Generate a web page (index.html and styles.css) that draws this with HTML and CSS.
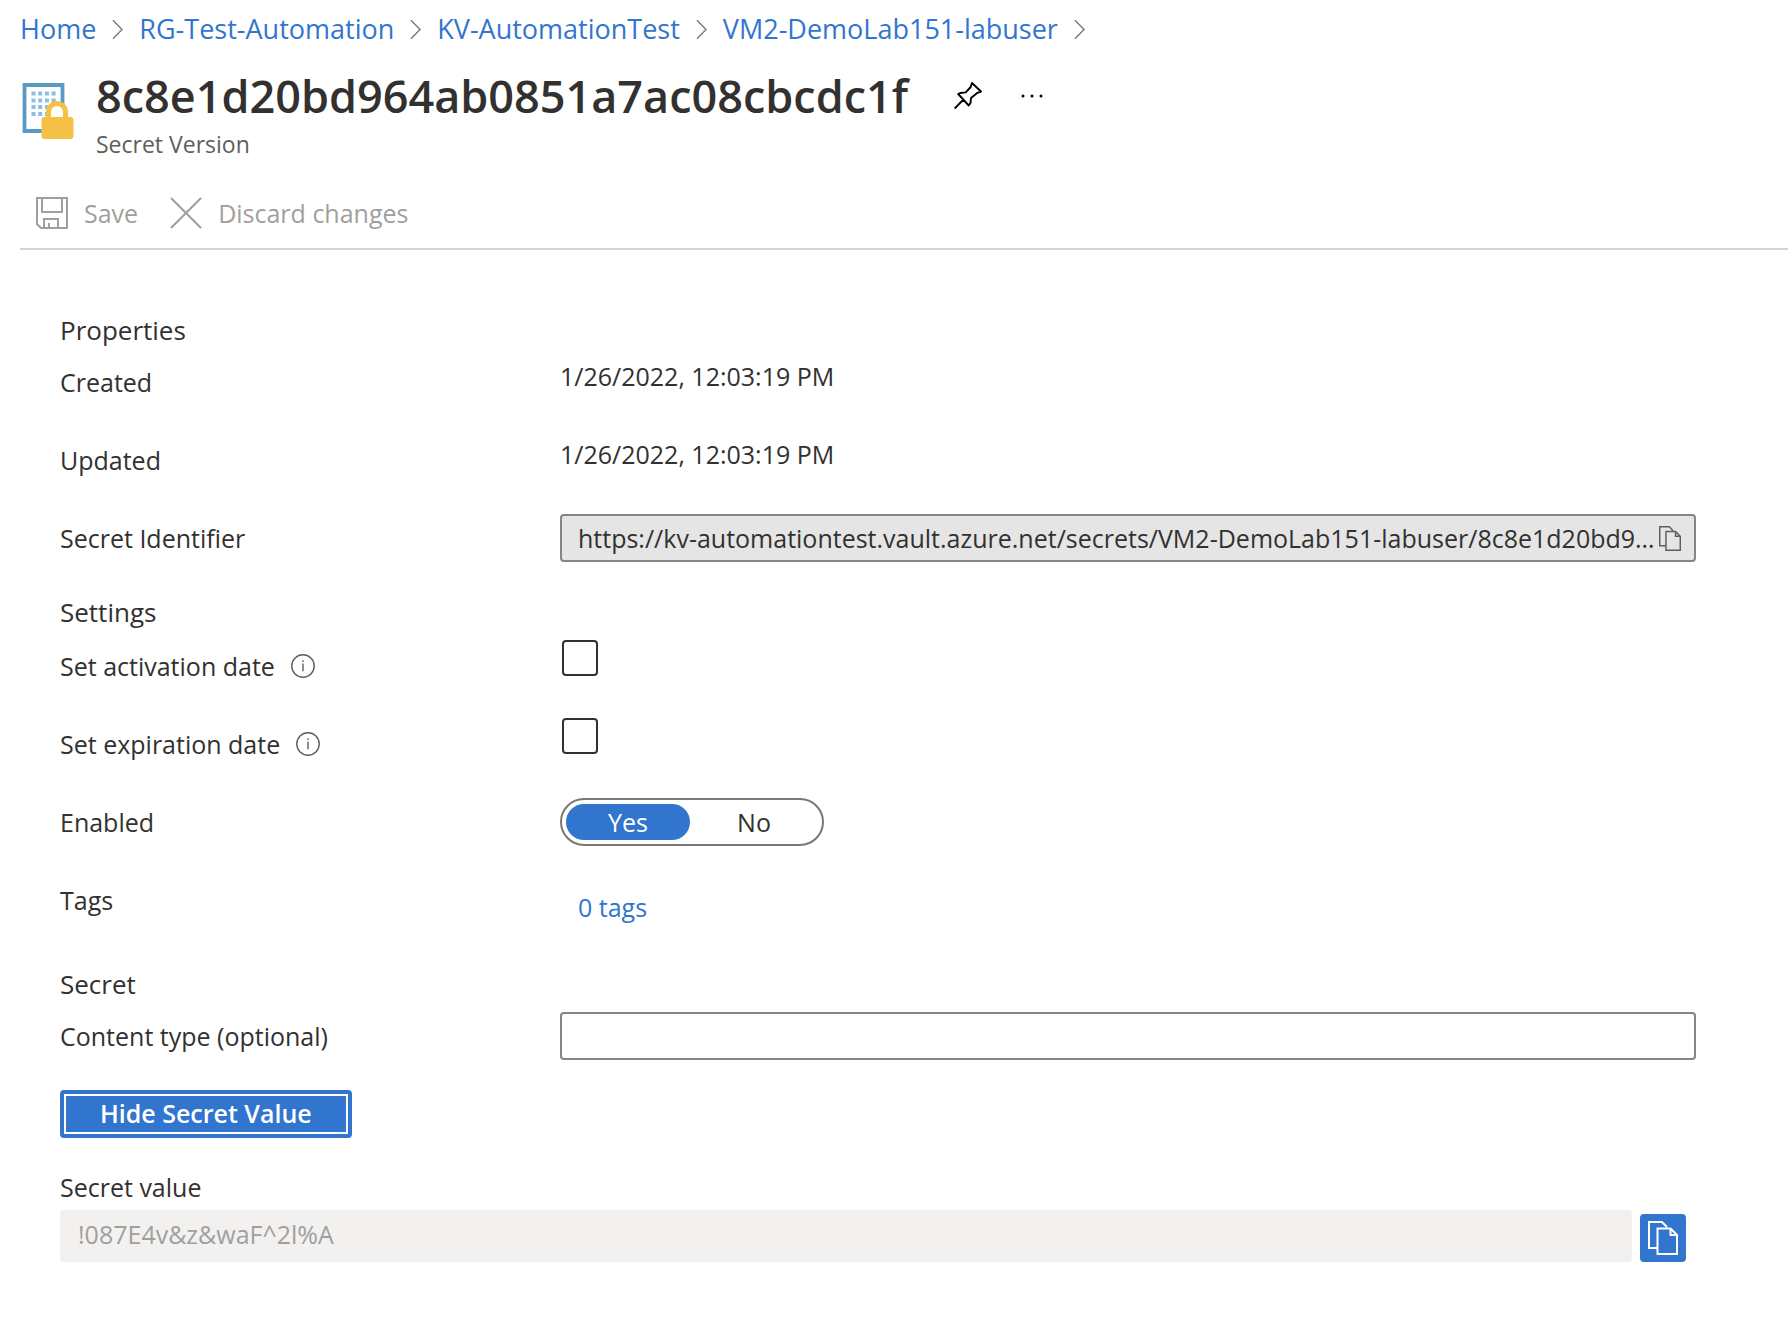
FILE: index.html
```html
<!DOCTYPE html>
<html lang="en">
<head>
<meta charset="utf-8">
<meta name="viewport" content="width=device-width, initial-scale=1">
<title>Secret Version</title>
<link rel="stylesheet" href="styles.css">
</head>
<body>
<svg class="sprite" aria-hidden="true">
  <symbol id="chevron" viewBox="0 0 12 22"><path d="M1 1l10 10L1 21" fill="none" stroke="currentColor" stroke-width="1.5"/></symbol>
  <symbol id="info" viewBox="0 0 24 24"><circle cx="12" cy="12" r="11.2" fill="none" stroke="currentColor" stroke-width="1.4"/><path d="M12 9.6v7.6M12 6.2v1.8" stroke="currentColor" stroke-width="1.4"/></symbol>
  <symbol id="copy" viewBox="0 0 30 34"><path d="M9 27H1V1h13l5 5M9.500 7.500h13l6.500 6.500v19H9.500zM22.500 7.500v6.500H29" fill="none" stroke="currentColor" stroke-width="2"/></symbol>
</svg>

<nav class="breadcrumb" aria-label="Breadcrumb">
  <a href="#">Home</a><svg class="chevron"><use href="#chevron"/></svg>
  <a href="#">RG-Test-Automation</a><svg class="chevron"><use href="#chevron"/></svg>
  <a href="#">KV-AutomationTest</a><svg class="chevron"><use href="#chevron"/></svg>
  <a href="#">VM2-DemoLab151-labuser</a><svg class="chevron"><use href="#chevron"/></svg>
</nav>

<header class="header">
  <svg class="header-icon" viewBox="0 0 52 58" aria-hidden="true">
    <path d="M2 2h38v46H2z" fill="#fff" stroke="#5a9bc4" stroke-width="3.800"/>
    <path d="M9 10.500h26M9 17.500h26M9 24h26M9 31h26" stroke="#8fbfdf" stroke-width="4" stroke-dasharray="4 2.700"/>
    <path d="M26 38v-9a8.500 8.500 0 0 1 17 0v9" fill="#fff" stroke="#f5c144" stroke-width="5"/>
    <rect x="19" y="34" width="32" height="22" rx="3" fill="#f5c144"/>
  </svg>
  <div class="header-text">
    <div class="title-row">
      <h1>8c8e1d20bd964ab0851a7ac08cbcdc1f</h1>
      <button class="icon-button" type="button" aria-label="Pin">
        <svg width="28" height="28" viewBox="0 0 28 28" fill="none" stroke="currentColor" stroke-width="1.900" stroke-linejoin="round"><path d="M18 1l9 8.500-3.500 1.300L17 16l-.5 5-1.800 2.500L4.200 12l2-1 5.500-.6L16.700 5zM9.300 17.700L.7 26.500"/></svg>
      </button>
      <button class="icon-button" type="button" aria-label="More">
        <svg width="24" height="30" viewBox="0 0 24 30" fill="currentColor"><circle cx="3" cy="15" r="1.500"/><circle cx="12" cy="15" r="1.500"/><circle cx="21" cy="15" r="1.500"/></svg>
      </button>
    </div>
    <p class="subtitle">Secret Version</p>
  </div>
</header>

<div class="toolbar">
  <button class="command" type="button" disabled>
    <svg width="32" height="32" viewBox="0 0 32 32" fill="none" stroke="currentColor" stroke-width="2"><path d="M1 1h30v30H5l-4-4zM6 1v14h20V1M8 31v-9h14v9M13 31v-5"/></svg>
    Save
  </button>
  <button class="command" type="button" disabled>
    <svg width="32" height="32" viewBox="0 0 32 32" fill="none" stroke="currentColor" stroke-width="2"><path d="M1 1l30 30M31 1L1 31"/></svg>
    Discard changes
  </button>
</div>

<main class="form">
  <section class="section">
    <h2>Properties</h2>
    <dl class="rows">
      <div class="row"><dt>Created</dt><dd class="value">1/26/2022, 12:03:19 PM</dd></div>
      <div class="row"><dt>Updated</dt><dd class="value">1/26/2022, 12:03:19 PM</dd></div>
      <div class="row">
        <dt><label for="identifier">Secret Identifier</label></dt>
        <dd class="copy-field">
          <input id="identifier" type="text" readonly value="https://kv-automationtest.vault.azure.net/secrets/VM2-DemoLab151-labuser/8c8e1d20bd964ab0851a7ac08cbcdc1f">
          <button class="copy-inline" type="button" aria-label="Copy secret identifier"><svg width="22" height="25"><use href="#copy"/></svg></button>
        </dd>
      </div>
    </dl>
  </section>

  <section class="section settings">
    <h2>Settings</h2>
    <div class="rows">
      <div class="row">
        <div class="label"><label for="activation">Set activation date</label><svg class="info"><use href="#info"/></svg></div>
        <input class="checkbox" id="activation" type="checkbox">
      </div>
      <div class="row">
        <div class="label"><label for="expiration">Set expiration date</label><svg class="info"><use href="#info"/></svg></div>
        <input class="checkbox" id="expiration" type="checkbox">
      </div>
      <div class="row">
        <div class="label" id="enabled-label">Enabled</div>
        <div class="toggle" role="radiogroup" aria-labelledby="enabled-label">
          <label class="option"><input type="radio" name="enabled" checked><span>Yes</span></label>
          <label class="option"><input type="radio" name="enabled"><span>No</span></label>
        </div>
      </div>
      <div class="row">
        <div class="label">Tags</div>
        <a class="tags" href="#">0 tags</a>
      </div>
    </div>
  </section>

  <section class="section secret">
    <h2>Secret</h2>
    <div class="row">
      <label for="content-type">Content type (optional)</label>
      <input class="text-field" id="content-type" type="text">
    </div>
    <button class="primary" type="button">Hide Secret Value</button>
    <label class="secret-label" for="secret-value">Secret value</label>
    <div class="secret-row">
      <input class="secret-field" id="secret-value" type="text" disabled value="!087E4v&amp;z&amp;waF^2l%A">
      <button class="copy-button" type="button" aria-label="Copy secret value"><svg width="30" height="34"><use href="#copy"/></svg></button>
    </div>
  </section>
</main>
</body>
</html>
```
FILE: styles.css
```css
:root {
  --blue: #3275cf;
  --text: #323130;
  --muted: #a19f9d;
  --border: #858585;
}

* { box-sizing: border-box; }

body {
  margin: 0;
  background: #fff;
  color: var(--text);
  font: 25px/36px "Open Sans", "Noto Sans", sans-serif;
}

h1, h2, p, dl, dd { margin: 0; }
button, input { font: inherit; color: inherit; }
button { border: 0; padding: 0; background: none; }
a { color: var(--blue); text-decoration: none; }
svg { flex: none; display: block; }
.sprite { display: none; }

.breadcrumb {
  display: flex;
  align-items: center;
  gap: 16px;
  padding: 11px 20px 0;
  font-size: 27px;
}
.chevron { width: 11px; height: 21px; color: #777; }

.header {
  display: flex;
  gap: 21px;
  padding: 17px 20px 0 22px;
}
.header-icon { width: 53px; height: 58px; margin-top: 19px; }
.title-row { display: flex; align-items: center; gap: 38px; }
h1 { margin-right: 8px; font-size: 45px; line-height: 64px; font-weight: 600; }
.icon-button { color: #000; }
.subtitle { line-height: 32px; font-size: 23px; color: #605e5c; }

.toolbar {
  display: flex;
  gap: 32px;
  margin-left: 20px;
  padding: 34px 16px 16px;
  border-bottom: 2px solid #d2d2d2;
}
.command { display: flex; align-items: center; gap: 16px; line-height: 38px; color: var(--muted); }

.form { padding: 62px 92px 82px 60px; }
h2 { margin-bottom: 10px; font-size: 26px; line-height: 36px; font-weight: 400; }
.rows { display: grid; gap: 30px; }
.row {
  display: grid;
  grid-template-columns: 500px 1fr;
  align-items: center;
  min-height: 48px;
}
.value { align-self: start; }
.label { display: flex; align-items: center; gap: 16px; }
.info { width: 24px; height: 24px; color: #605e5c; }

.copy-field {
  display: flex;
  align-items: center;
  gap: 3px;
  height: 48px;
  padding: 0 13px 0 16px;
  border: 2px solid var(--border);
  border-radius: 4px;
  background: #e5e5e5;
}
.copy-field input {
  flex: 1;
  min-width: 0;
  padding: 0;
  border: 0;
  background: none;
  text-overflow: ellipsis;
}
.copy-inline { color: #605e5c; }

.settings { margin-top: 32px; }
.settings .rows { gap: 26px; }
.settings .row { min-height: 52px; }
.checkbox {
  appearance: none;
  align-self: start;
  width: 36px;
  height: 36px;
  margin: 0 2px;
  border: 2px solid var(--text);
  border-radius: 4px;
}
.toggle {
  display: grid;
  grid-template-columns: 124px 128px;
  justify-self: start;
  width: 264px;
  height: 48px;
  padding: 4px;
  border: 2px solid #7d7773;
  border-radius: 24px;
}
.option input { position: absolute; opacity: 0; }
.option span { display: block; border-radius: 18px; text-align: center; }
.option input:checked + span { background: var(--blue); color: #fff; }
.tags { align-self: end; padding-left: 18px; line-height: 38px; }

.secret { margin-top: 40px; }
.text-field {
  width: 100%;
  height: 48px;
  padding: 0 16px;
  border: 2px solid var(--border);
  border-radius: 4px;
}
.primary {
  display: block;
  height: 48px;
  margin-top: 30px;
  padding: 0 40px 2px;
  border-radius: 4px;
  background: var(--blue);
  color: #fff;
  font-weight: 600;
  outline: 2px solid #fff;
  outline-offset: -6px;
}
.secret-label { display: block; margin: 32px 0 6px; line-height: 34px; }
.secret-row { display: flex; align-items: end; gap: 8px; margin-right: 10px; }
.secret-field {
  flex: 1;
  min-width: 0;
  height: 52px;
  padding: 0 18px 4px;
  border: 0;
  border-radius: 4px;
  background: #f2f1f0;
  color: var(--muted);
}
.copy-button {
  display: grid;
  place-items: center;
  width: 46px;
  height: 48px;
  border-radius: 4px;
  background: var(--blue);
  color: #fff;
}
```
